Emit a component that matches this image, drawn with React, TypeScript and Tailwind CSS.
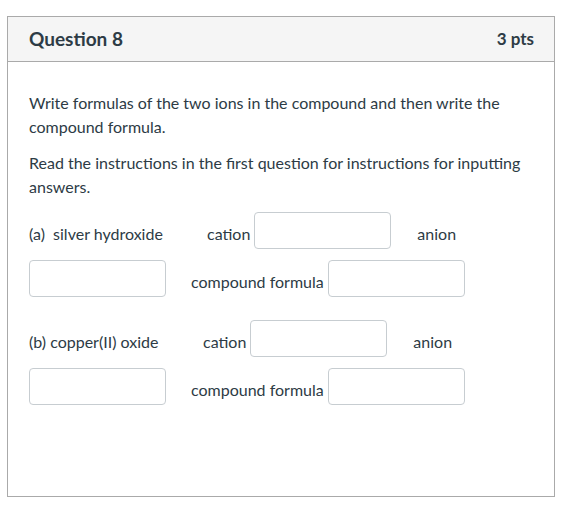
import React from "react";

const inputCls =
  "w-[137px] h-[37px] border border-[#c7cdd1] rounded-[4px] bg-white shrink-0";

function Row({ label, labelW }: { label: string; labelW: string }) {
  return (
    <>
      <div className="flex items-center h-[37px]">
        <span className={`${labelW} mt-[7px] whitespace-pre`}>{label}</span>
        <span className="mt-[7px]">cation</span>
        <div className={`${inputCls} ml-[4px]`} />
        <span className="mt-[7px] ml-[26px]">anion</span>
      </div>
      <div className="flex items-center h-[37px] mt-[11px]">
        <div className={inputCls} />
        <span className="mt-[7px] ml-[25px]">compound formula</span>
        <div className={`${inputCls} ml-[4px]`} />
      </div>
    </>
  );
}

export default function App() {
  return (
    <div
      className="pt-[16px] pl-[7px] bg-white w-[576px] h-[513px] text-[#2d3b45]"
      style={{ fontFamily: "Lato, 'Liberation Sans', sans-serif" }}
    >
      <div className="w-[548px] h-[481px] border border-[#aaaaaa] flex flex-col">
        <div className="h-[45px] shrink-0 bg-[#f5f5f5] border-b border-[#aaaaaa] flex items-center justify-between pl-[21px] pr-[20px]">
          <span className="text-[19px] font-bold">Question 8</span>
          <span className="text-[17px] font-bold">3 pts</span>
        </div>
        <div className="pl-[21px] pr-[20px] pt-[29px] text-[16px] leading-[24px]">
          <p>
            Write formulas of the two ions in the compound and then write the
            compound formula.
          </p>
          <p className="mt-[12px]">
            Read the instructions in the first question for instructions for
            inputting answers.
          </p>
          <div className="mt-[13px]">
            <Row label={"(a)\u00a0 silver hydroxide"} labelW="w-[178px]" />
          </div>
          <div className="mt-[23px]">
            <Row label={"(b) copper(II) oxide"} labelW="w-[174px]" />
          </div>
        </div>
      </div>
    </div>
  );
}
